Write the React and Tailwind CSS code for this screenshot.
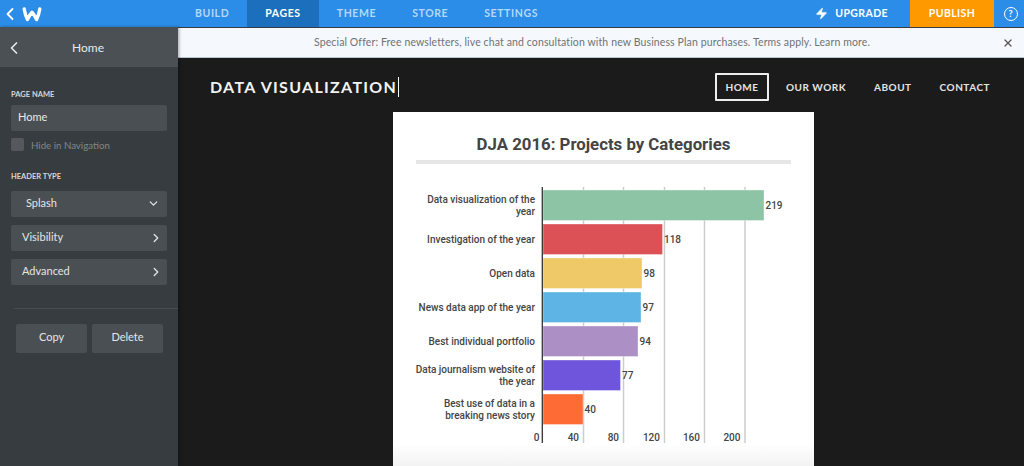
import { ChevronLeft, ChevronRight, ChevronDown, X, Zap } from 'lucide-react'

const NAV = ['BUILD', 'PAGES', 'THEME', 'STORE', 'SETTINGS']
const SITE_NAV = ['OUR WORK', 'ABOUT', 'CONTACT']

const BARS = [
  { label: ['Data visualization of the', 'year'], value: 219, end: 764, color: '#8ec4a6' },
  { label: ['Investigation of the year'], value: 118, end: 662.5, color: '#dc5156' },
  { label: ['Open data'], value: 98, end: 642, color: '#efc967' },
  { label: ['News data app of the year'], value: 97, end: 641, color: '#5eb4e5' },
  { label: ['Best individual portfolio'], value: 94, end: 638, color: '#ac8fc4' },
  { label: ['Data journalism website of', 'the year'], value: 77, end: 620.5, color: '#6e55db' },
  { label: ['Best use of data in a', 'breaking news story'], value: 40, end: 583, color: '#ff6b35' },
]
const TICKS = [
  { v: 40, x: 583.5 },
  { v: 80, x: 623.5 },
  { v: 120, x: 664.5 },
  { v: 160, x: 704.5 },
  { v: 200, x: 745 },
]

function WeeblyLogo() {
  return (
    <svg width="20" height="16" viewBox="0 0 20 16" fill="none" stroke="white" strokeWidth="3.4" strokeLinejoin="round" strokeLinecap="round">
      <path d="M2.2 3C2.8 6.6 3.8 10.4 5.4 13.6 6.6 10.8 8 8.2 10 6.2 12 8.2 13.4 10.8 14.6 13.6 16.2 10.4 17.2 6.6 17.8 3" />
    </svg>
  )
}

function TopBar() {
  return (
    <div className="flex h-[27px] shrink-0 items-stretch bg-[#2b8de8] text-white">
      <div className="flex w-[177px] items-center gap-[2px]">
        <ChevronLeft className="h-[20px] w-[20px]" strokeWidth={2.2} />
        <WeeblyLogo />
      </div>
      {NAV.map(item => (
        <div
          key={item}
          className={`flex items-center justify-center px-[18px] text-[10.5px] font-bold tracking-[0.6px] ${
            item === 'PAGES' ? 'bg-[#1b6fbd] text-white' : 'text-[#b4d8f8]'
          }`}
        >
          {item}
        </div>
      ))}
      <div className="ml-auto flex items-center gap-[7px] pr-[22px] text-[10.5px] font-bold tracking-[0.4px]">
        <Zap className="h-[13px] w-[13px] fill-white" strokeWidth={1} />
        UPGRADE
      </div>
      <div className="flex w-[84px] items-center justify-center bg-[#ff9900] text-[10.5px] font-bold tracking-[0.4px]">
        PUBLISH
      </div>
      <div className="flex w-[30px] items-center justify-center pl-[3px]">
        <span className="flex h-[14px] w-[14px] items-center justify-center rounded-full border border-white text-[9px] font-bold leading-none">?</span>
      </div>
    </div>
  )
}

function SideRow({ label, chevron, indent }) {
  return (
    <div className={`flex h-[26px] items-center justify-between rounded-[2px] bg-[#4a4f53] pb-[1px] pr-[7px] text-[11px] text-[#e4e6e7] ${indent ? 'pl-[15px]' : 'pl-[11px]'}`}>
      {label}
      {chevron}
    </div>
  )
}

function Sidebar() {
  return (
    <div className="relative z-10 flex w-[178px] shrink-0 flex-col bg-[#373c40] shadow-[1px_0_3px_rgba(0,0,0,0.35)]">
      <div className="relative flex h-[40px] items-center justify-center bg-[#4b5054] pt-[1px] text-[12px] text-[#e8e9ea]">
        <ChevronLeft className="absolute left-[4px] h-[20px] w-[20px]" strokeWidth={2} />
        <span className="pr-[2px]">Home</span>
      </div>
      <div className="pl-[11px] pr-[11px]">
        <div className="mt-[23px] text-[7.5px] font-bold leading-[9px] text-[#d5d7d8]">PAGE NAME</div>
        <div className="mt-[6px] flex h-[26px] items-center rounded-[2px] bg-[#4a4f53] pb-[1px] pl-[7px] text-[11px] text-[#e8e9ea]">Home</div>
        <div className="mt-[7px] flex h-[13px] items-center gap-[7px] text-[9.7px] text-[#82878a]">
          <span className="h-[13px] w-[13px] rounded-[2px] bg-[#55595d]" />
          <span className="pt-[2px]">Hide in Navigation</span>
        </div>
        <div className="mt-[21px] text-[7.5px] font-bold leading-[9px] text-[#d5d7d8]">HEADER TYPE</div>
        <div className="mt-[10px] flex flex-col gap-[8px]">
          <SideRow label="Splash" indent chevron={<ChevronDown className="h-[13px] w-[13px]" strokeWidth={2.4} />} />
          <SideRow label="Visibility" chevron={<ChevronRight className="-mr-[3px] h-[14px] w-[14px]" strokeWidth={2.2} />} />
          <SideRow label="Advanced" chevron={<ChevronRight className="-mr-[3px] h-[14px] w-[14px]" strokeWidth={2.2} />} />
        </div>
      </div>
      <div className="ml-[14px] mt-[23px] h-px bg-[#474c50]" />
      <div className="ml-[16px] mt-[15px] flex gap-[5px]">
        <div className="flex h-[29px] w-[71px] items-center justify-center rounded-[2px] bg-[#4a4f53] pb-[2px] text-[11px] text-[#e4e6e7]">Copy</div>
        <div className="flex h-[29px] w-[71px] items-center justify-center rounded-[2px] bg-[#4a4f53] pb-[2px] text-[11px] text-[#e4e6e7]">Delete</div>
      </div>
    </div>
  )
}

// origin of the svg is the page position (410, 180), so the numbers read like the picture
function Chart() {
  return (
    <svg width="384" height="270" viewBox="410 180 384 270" className="ml-[17px] mt-[16px] block">
      <g style={{ fontFamily: 'Roboto, sans-serif' }} fontSize="10" fontWeight="500" fill="#444">
        {TICKS.map(t => (
          <line key={t.v} x1={t.x} x2={t.x} y1="187" y2="443" stroke="#ccc" strokeWidth="1.5" />
        ))}
        {BARS.map((b, i) => {
          const top = 190 + i * 34
          const mid = top + 15
          return (
            <g key={b.value}>
              <rect x="543" y={top} width={b.end - 543} height="30.5" fill={b.color} stroke="#fff" strokeOpacity="0.35" strokeWidth="1" />
              {b.label.map((line, j) => (
                <text key={line} x="535" y={mid + 3.5 + (j - (b.label.length - 1) / 2) * 12} textAnchor="end">{line}</text>
              ))}
              <text x={b.end + 1.5} y={mid + 3.5}>{b.value}</text>
            </g>
          )
        })}
        <line x1="542.3" x2="542.3" y1="187" y2="443" stroke="#333" strokeWidth="1.3" />
        <text x="539.5" y="440.5" textAnchor="end">0</text>
        {TICKS.map(t => (
          <text key={t.v} x={t.x - 4.5} y="440.5" textAnchor="end">{t.v}</text>
        ))}
      </g>
    </svg>
  )
}

function Site() {
  return (
    <div className="flex min-w-0 flex-1 flex-col">
      <div className="relative mt-[1px] flex h-[30px] shrink-0 items-center justify-center border-b border-[#b8c6d6] bg-[#f5f9fe] pr-[18px] text-[10.5px] tracking-[0.12px] text-[#6f7274]">
        Special Offer: Free newsletters, live chat and consultation with new Business Plan purchases. Terms apply. Learn more.
        <X className="absolute right-[10px] top-[9px] h-[12px] w-[12px] text-[#555]" strokeWidth={2.4} />
      </div>
      <div className="flex min-h-0 flex-1 flex-col bg-[#1b1b1b]">
        <div className="flex h-[54px] shrink-0 items-center pl-[32px] pr-[34px] pt-[4px]">
          <span className="border-r border-white pr-px text-[16px] font-bold leading-[20px] tracking-[1.3px] text-[#f2f2f2]">DATA VISUALIZATION</span>
          <div className="ml-auto flex items-center text-[10px] font-bold tracking-[0.5px] text-[#e4e4e4]">
            <span className="flex h-[28px] w-[54px] items-center justify-center rounded-[1px] border-2 border-[#eee]">HOME</span>
            <div className="ml-[17px] flex gap-[28px]">
              {SITE_NAV.map(item => <span key={item}>{item}</span>)}
            </div>
          </div>
        </div>
        <div className="relative ml-[215px] h-[354px] w-[421px] overflow-hidden bg-white">
          <div className="mt-[22px] text-center text-[16.8px] font-bold leading-[20px] text-[#444]" style={{ fontFamily: 'Roboto, sans-serif' }}>
            DJA 2016: Projects by Categories
          </div>
          <div className="mx-[23px] mt-[6px] h-[4px] bg-[#e6e6e6]" />
          <Chart />
          <div className="absolute inset-x-0 bottom-0 h-[23px] bg-gradient-to-b from-white to-[#f3f3f3]" />
        </div>
      </div>
    </div>
  )
}

export default function App() {
  return (
    <div className="flex h-[466px] w-[1024px] flex-col overflow-hidden bg-[#373c40] font-['Lato',sans-serif]">
      <TopBar />
      <div className="flex min-h-0 flex-1">
        <Sidebar />
        <Site />
      </div>
    </div>
  )
}
